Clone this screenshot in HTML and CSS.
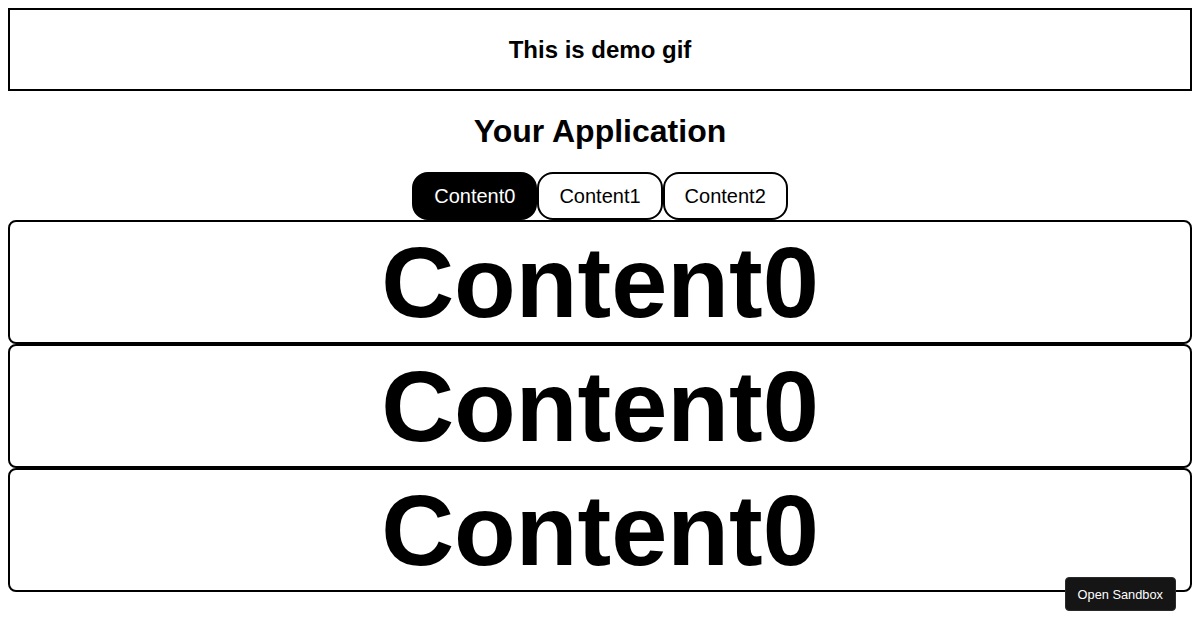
FILE: index.html
```html
<!DOCTYPE html>
<html>
<head>
<meta charset="utf-8">
<link rel="stylesheet" href="styles.css">
</head>
<body>
<div class="banner">This is demo gif</div>
<h1 class="title">Your Application</h1>
<div class="tabs">
  <button class="tab active">Content0</button>
  <button class="tab">Content1</button>
  <button class="tab">Content2</button>
</div>
<div class="panel">Content0</div>
<div class="panel">Content0</div>
<div class="panel">Content0</div>
<a class="sandbox">Open Sandbox</a>
</body>
</html>
```
FILE: styles.css
```css
html, body {
  background: #fff;
}
body {
  margin: 8px;
  font-family: "Liberation Sans", Arial, sans-serif;
  color: #000;
}
.banner {
  border: 2px solid #000;
  height: 79px;
  display: flex;
  align-items: center;
  justify-content: center;
  font-size: 24px;
  font-weight: bold;
}
.title {
  font-size: 32px;
  font-weight: bold;
  text-align: center;
  margin: 22px 0 22px;
  line-height: 37px;
}
.tabs {
  display: flex;
  justify-content: center;
}
.tab {
  font-family: "Liberation Sans", Arial, sans-serif;
  font-size: 20px;
  line-height: 24px;
  padding: 10px 20px;
  border: 2px solid #000;
  border-radius: 16px;
  background: #fff;
  color: #000;
  margin: 0;
}
.tab.active {
  background: #000;
  color: #fff;
}
.panel {
  border: 2px solid #000;
  border-radius: 8px;
  height: 120px;
  display: flex;
  align-items: center;
  justify-content: center;
  font-size: 101px;
  font-weight: bold;
  line-height: 115px;
}
.sandbox {
  position: fixed;
  right: 24px;
  bottom: 19px;
  background: #151515;
  color: #fff;
  font-size: 12.8px;
  height: 34px;
  line-height: 34px;
  padding: 0 12px;
  border-radius: 4px;
  border: 1px solid #2a2a2a;
  box-sizing: border-box;
}
```
